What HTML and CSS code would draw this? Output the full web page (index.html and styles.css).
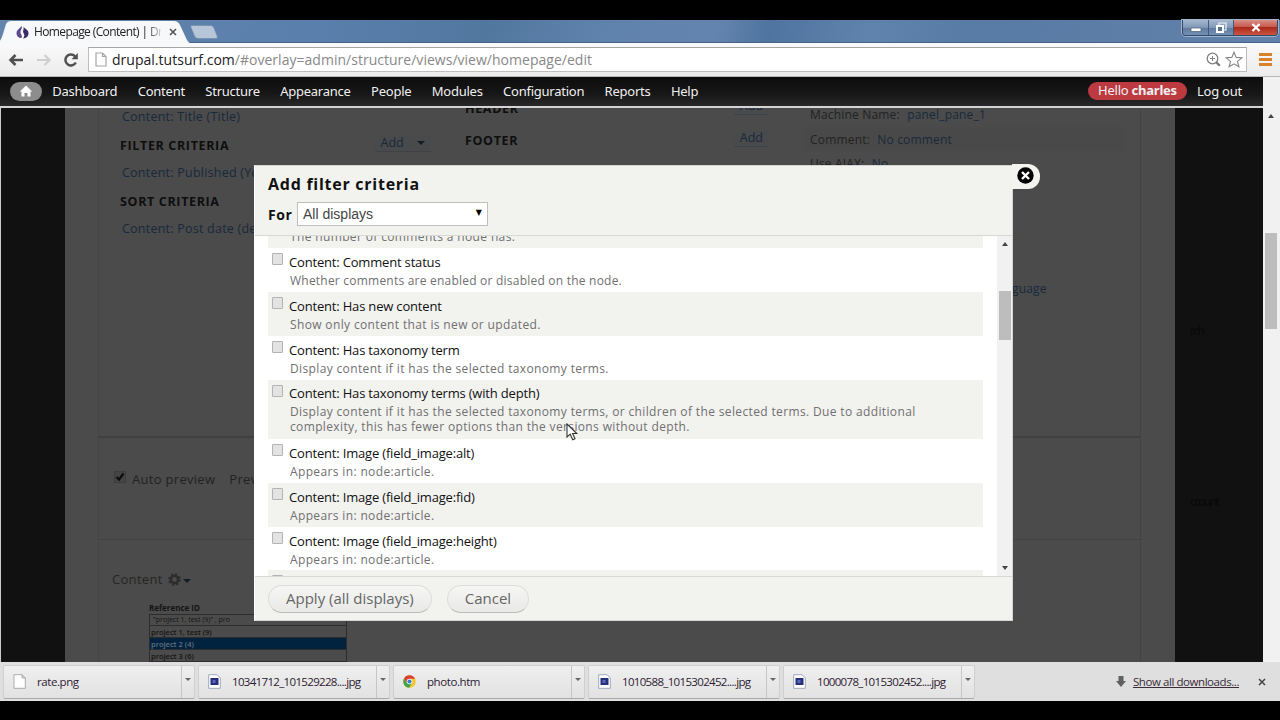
FILE: index.html
```
<!DOCTYPE html>
<html lang="en">
<head>
    <meta charset="UTF-8">
    <meta name="viewport" content="width=device-width, initial-scale=1.0">
    <title>Homepage (Content) | Drupal</title>
    <link rel="stylesheet" href="styles.css">
</head>
<body>
    <div class="browser">
        <div class="tabstrip">
            <div class="tab">
                <svg class="tab-shape" width="196" height="24" viewBox="0 0 196 24"><path d="M0 24 C4 22 5 20 7 14 L10 4 Q11.500 1 15 1 H178 Q182 1 184 5 L190 18 Q192 23 196 24 Z" fill="#f7f8f9"/></svg>
                <svg class="favicon" width="13" height="14" viewBox="0 0 13 14"><path d="M5.500 .5 C5 3 .5 4.500 .5 8 C.5 11 2.500 13 5.500 13 C7 10.500 4 9 4.500 6.500 C5 4.500 6.500 3 5.500 .5Z" fill="#5a4a8c"/><path d="M7.300 1 C8 3.500 12.500 4.500 12.500 8 C12.500 11.500 10 13.500 7 13.400 C9 11 8.500 9.500 7.500 8 C6.300 6 8.500 4 7.300 1Z" fill="#3b2d63"/></svg>
                <span class="tab-title">Homepage (Content) | Dr</span>
                <svg class="tab-close" width="8" height="8" viewBox="0 0 8 8"><path d="M1 1 L7 7 M7 1 L1 7" stroke="#555" stroke-width="1.600"/></svg>
            </div>
            <svg class="new-tab" width="29" height="14" viewBox="0 0 29 14"><path d="M1 .5 H21 Q23 .5 24 3 L27.500 12 Q27.500 13.500 26 13.500 H8 Q5.500 13.500 4.500 11 L.8 2 Z" fill="#b6c5d8" stroke="#6c86a8" stroke-width=".6"/></svg>
            <div class="window-buttons">
                <span class="win-btn win-min"><svg width="12" height="6" viewBox="0 0 12 6"><rect x="1" y="1" width="10" height="3.500" fill="#fff" stroke="#4c5a70" stroke-width=".7"/></svg></span>
                <span class="win-btn win-max"><svg width="12" height="12" viewBox="0 0 12 12"><path d="M4 3 V1 H11 V8 H9" fill="none" stroke="#eef2f8" stroke-width="1.200"/><rect x="2" y="4" width="6" height="6" fill="#56708f" stroke="#fff" stroke-width="2"/></svg></span>
                <span class="win-btn win-close"><svg width="10" height="9" viewBox="0 0 10 9"><path d="M1.500 1 L8.500 8 M8.500 1 L1.500 8" stroke="#fff" stroke-width="2.400"/></svg></span>
            </div>
        </div>

        <div class="toolbar">
            <svg class="nav-icon" width="16" height="14" viewBox="0 0 16 14"><path d="M15 7 H3 M7.500 2 L2.500 7 L7.500 12" fill="none" stroke="#505050" stroke-width="2.600"/></svg>
            <svg class="nav-icon" width="16" height="14" viewBox="0 0 16 14"><path d="M1 7 H13 M8.500 2 L13.500 7 L8.500 12" fill="none" stroke="#cfcfcf" stroke-width="2.200"/></svg>
            <svg class="nav-icon reload" width="16" height="16" viewBox="0 0 16 16"><path d="M12.800 10.500 A5.500 5.500 0 1 1 12 4.300" fill="none" stroke="#505050" stroke-width="2.500"/><path d="M14.800 1 V7.300 H8.500 Z" fill="#505050"/></svg>
            <div class="omnibox">
                <svg width="12" height="15" viewBox="0 0 12 15"><path d="M1 1 H7.500 L11 4.500 V14 H1 Z M7.500 1 V4.500 H11" fill="#fff" stroke="#a5a5a5" stroke-width="1.200"/></svg>
                <span class="url"><span class="host">drupal.tutsurf.com</span>/#overlay=admin/structure/views/view/homepage/edit</span>
                <svg class="zoom-icon" width="15" height="15" viewBox="0 0 15 15"><circle cx="6.500" cy="6.500" r="5.300" fill="none" stroke="#808080" stroke-width="1.300"/><path d="M4 6.500 H9 M6.500 4 V9" stroke="#808080"/><path d="M10.300 10.300 L13.800 13.800" stroke="#777" stroke-width="2.200"/></svg>
                <svg class="star-icon" width="18" height="17" viewBox="0 0 18 17"><path d="M9 1.200 L11.200 6.400 L16.800 6.800 L12.500 10.400 L13.900 15.800 L9 12.900 L4.100 15.800 L5.500 10.400 L1.200 6.800 L6.800 6.400 Z" fill="#fff" stroke="#858585" stroke-width="1.100"/></svg>
            </div>
            <div class="menu-icon"><i></i><i></i><i></i></div>
        </div>

        <div class="content">
            <div class="site">
                <div class="admin-bar">
                    <span class="home"><svg width="14" height="12" viewBox="0 0 14 12"><path d="M7 .5 L13.200 6.500 H11.500 V11.500 H8.500 V8 H5.500 V11.500 H2.500 V6.500 H.8 Z" fill="#fff"/></svg></span>
                    <a>Dashboard</a>
                    <a>Content</a>
                    <a>Structure</a>
                    <a>Appearance</a>
                    <a>People</a>
                    <a>Modules</a>
                    <a>Configuration</a>
                    <a>Reports</a>
                    <a>Help</a>
                    <span class="user">Hello <b>charles</b></span>
                    <a class="logout">Log out</a>
                </div>

                <div class="stage">
                    <div class="page">
                        <div class="views-columns">
                            <div class="column first">
                                <div class="setting link">Content: Title (Title)</div>
                                <div class="bucket">FILTER CRITERIA <span class="add split">Add <i class="caret"></i></span></div>
                                <div class="setting link">Content: Published (Yes)</div>
                                <div class="bucket">SORT CRITERIA</div>
                                <div class="setting link">Content: Post date (desc)</div>
                            </div>
                            <div class="column second">
                                <div class="bucket">HEADER <span class="add">Add</span></div>
                                <div class="bucket">FOOTER <span class="add">Add</span></div>
                            </div>
                            <div class="column third">
                                <div class="detail">Machine Name: <span class="link">panel_pane_1</span></div>
                                <div class="detail shade">Comment: <span class="link">No comment</span></div>
                                <div class="detail">Use AJAX: <span class="link">No</span></div>
                                <div class="detail language"><span class="link">guage</span></div>
                            </div>
                        </div>
                        <div class="preview-bar">
                            <svg width="12" height="12" viewBox="0 0 12 12"><rect x=".5" y=".5" width="11" height="11" fill="#454545" stroke="#3c3c3c"/><path d="M2.500 6 L5 8.500 L9.500 2.500" fill="none" stroke="#0c0c0c" stroke-width="2.200"/></svg>
                            <span>Auto preview</span>
                            <span class="preview-args">Prev</span>
                        </div>
                        <div class="preview">
                            <div class="preview-title">Content
                                <svg width="13" height="13" viewBox="0 0 13 13"><circle cx="6.500" cy="6.500" r="3.600" fill="none" stroke="#2c2c2c" stroke-width="2.400"/><circle cx="6.500" cy="6.500" r="5.400" fill="none" stroke="#2c2c2c" stroke-width="1.800" stroke-dasharray="2.200 2.040"/></svg><i class="caret"></i>
                            </div>
                            <div class="reference">
                                <div class="reference-label">Reference ID</div>
                                <div class="reference-input">"project 1, test (9)" , pro</div>
                                <div class="reference-row">project 1, test (9)</div>
                                <div class="reference-row selected">project 2 (4)</div>
                                <div class="reference-row">project 3 (6)</div>
                            </div>
                        </div>
                    </div>
                    <div class="gutter">
                        <span>rch</span>
                        <span>ccount</span>
                    </div>
                </div>
            </div>
            <div class="scrollbar page-scroll"><i class="up"></i><i class="thumb"></i></div>

            <div class="modal">
                <span class="modal-close"><svg width="17" height="17" viewBox="0 0 17 17"><circle cx="8.500" cy="8.500" r="8.200" fill="#000"/><path d="M5 5 L12 12 M12 5 L5 12" stroke="#fff" stroke-width="2.400"/></svg></span>
                <div class="modal-header">
                    <h1>Add filter criteria</h1>
                    <div class="for">For <span class="select">All displays <i>▼</i></span></div>
                </div>
                <div class="modal-body">
                    <div class="options">
                        <div class="option odd cut"><div class="desc">The number of comments a node has.</div></div>
                        <div class="option"><i class="box"></i><div class="name">Content: Comment status</div><div class="desc tight">Whether comments are enabled or disabled on the node.</div></div>
                        <div class="option odd"><i class="box"></i><div class="name">Content: Has new content</div><div class="desc">Show only content that is new or updated.</div></div>
                        <div class="option"><i class="box"></i><div class="name">Content: Has taxonomy term</div><div class="desc">Display content if it has the selected taxonomy terms.</div></div>
                        <div class="option odd tall"><i class="box"></i><div class="name">Content: Has taxonomy terms (with depth)</div><div class="desc">Display content if it has the selected taxonomy terms, or children of the selected terms. Due to additional<br>complexity, this has fewer options than the versions without depth.</div></div>
                        <div class="option"><i class="box"></i><div class="name">Content: Image (field_image:alt)</div><div class="desc">Appears in: node:article.</div></div>
                        <div class="option odd"><i class="box"></i><div class="name">Content: Image (field_image:fid)</div><div class="desc">Appears in: node:article.</div></div>
                        <div class="option last"><i class="box"></i><div class="name">Content: Image (field_image:height)</div><div class="desc">Appears in: node:article.</div></div>
                        <div class="option odd"><i class="box"></i></div>
                    </div>
                    <div class="scrollbar modal-scroll"><i class="up"></i><i class="thumb"></i><i class="down"></i></div>
                </div>
                <div class="modal-footer">
                    <span class="button">Apply (all displays)</span>
                    <span class="button">Cancel</span>
                </div>
            </div>
            <svg class="cursor" width="13" height="19" viewBox="0 0 13 19"><path d="M1 1 V14 L4.200 11.200 L6.700 16.800 L9 15.800 L6.600 10.500 H10.800 Z" fill="#fff" stroke="#333" stroke-width="1.100"/></svg>
        </div>

        <div class="downloads">
            <div class="download">
                <svg width="13" height="15" viewBox="0 0 13 15"><path d="M1 .7 H9 L12.300 4 V14.300 H1 Z M9 .7 V4 H12.300" fill="#fff" stroke="#999" stroke-width=".8"/></svg>
                <span>rate.png</span><i class="more"></i>
            </div>
            <div class="download">
                <svg width="13" height="15" viewBox="0 0 13 15"><path d="M.7 .7 H9 L12.300 4 V14.300 H.7 Z" fill="#fff" stroke="#8a97b0" stroke-width=".8"/><rect x="2.500" y="4" width="8" height="7" fill="#28307c"/><rect x="4.500" y="6" width="3" height="3" fill="#5968b8"/></svg>
                <span class="digits">10341712_101529228....jpg</span><i class="more"></i>
            </div>
            <div class="download">
                <svg width="13" height="15" viewBox="0 0 13 15"><circle cx="6.500" cy="7.500" r="6.300" fill="#f3c82f"/><path d="M1 4.500 A6.300 6.300 0 0 1 12.100 4.700 H6.500 L4 9 Z" fill="#d9403a"/><path d="M1 4.500 A6.300 6.300 0 0 0 6 13.800 L9 9 L4 9 Z" fill="#3fa34d"/><circle cx="6.500" cy="7.500" r="2.800" fill="#fff"/><circle cx="6.500" cy="7.500" r="2.100" fill="#3b7dc8"/></svg>
                <span>photo.htm</span><i class="more"></i>
            </div>
            <div class="download">
                <svg width="13" height="15" viewBox="0 0 13 15"><path d="M.7 .7 H9 L12.300 4 V14.300 H.7 Z" fill="#fff" stroke="#8a97b0" stroke-width=".8"/><rect x="2.500" y="4" width="8" height="7" fill="#28307c"/><rect x="4.500" y="6" width="3" height="3" fill="#5968b8"/></svg>
                <span class="digits">1010588_1015302452....jpg</span><i class="more"></i>
            </div>
            <div class="download">
                <svg width="13" height="15" viewBox="0 0 13 15"><path d="M.7 .7 H9 L12.300 4 V14.300 H.7 Z" fill="#fff" stroke="#8a97b0" stroke-width=".8"/><rect x="2.500" y="4" width="8" height="7" fill="#28307c"/><rect x="4.500" y="6" width="3" height="3" fill="#5968b8"/></svg>
                <span class="digits">1000078_1015302452....jpg</span><i class="more"></i>
            </div>
            <div class="show-all">
                <svg width="10" height="11" viewBox="0 0 10 11"><path d="M2.500 0 H7.500 V5 H10 L5 11 L0 5 H2.500 Z" fill="#606060"/></svg>
                <a>Show all downloads...</a>
                <svg class="shelf-close" width="8" height="8" viewBox="0 0 8 8"><path d="M1 1 L7 7 M7 1 L1 7" stroke="#444" stroke-width="1.500"/></svg>
            </div>
        </div>
    </div>
</body>
</html>
```
FILE: styles.css
```
* {
    box-sizing: border-box;
}

body {
    margin: 0;
    padding: 20px 0;
    height: 720px;
    overflow: hidden;
    background: #000;
    font-family: "Open Sans", "Noto Sans", sans-serif;
    white-space: nowrap;
}

svg {
    display: block;
    flex: none;
}

.browser {
    height: 681px;
    display: flex;
    flex-direction: column;
}

/* window frame */
.tabstrip {
    height: 23px;
    display: flex;
    align-items: flex-start;
    background: linear-gradient(100deg, #6484ac 0%, #5a7fac 25%, #52779f 38%, #6083ad 48%, #6384ae 56%, #4f749f 60%, #6083ad 68%, #587ba5 76%, #6081aa 100%);
    border-bottom: 1px solid #45638a;
}

.tab {
    position: relative;
    width: 190px;
    height: 23px;
    padding: 0 0 0 16px;
    display: flex;
    align-items: center;
    flex: none;
}

.tab-shape {
    position: absolute;
    left: -4px;
    top: 0;
}

.favicon, .tab-close {
    position: relative;
}

.tab-title {
    position: relative;
    width: 127px;
    margin: 0 8px 0 5px;
    overflow: hidden;
    font-size: 12px;
    line-height: 22px;
    letter-spacing: -0.620px;
    color: #222;
    -webkit-mask-image: linear-gradient(to right, #000 112px, transparent 130px);
}

.new-tab {
    margin: 5px 0 0 0;
}

.window-buttons {
    display: flex;
    margin: 0 2px 0 auto;
    border: 1px solid #33496a;
    border-top: 0;
    border-radius: 0 0 4px 4px;
    box-shadow: 0 0 0 1px #9fb4ce;
    overflow: hidden;
}

.win-btn {
    height: 15px;
    display: flex;
    align-items: center;
    justify-content: center;
    background: linear-gradient(#a4b6cc, #8199b8 50%, #5e7a9e 51%, #7391b5);
    border-right: 1px solid #42597b;
}

.win-min {
    width: 26px;
    padding-top: 4px;
}

.win-max {
    width: 25px;
}

.win-close {
    width: 43px;
    border: 0;
    background: linear-gradient(#d98f86, #c65a4d 45%, #ab2a1d 50%, #cc5540);
}

.toolbar {
    height: 34px;
    display: flex;
    align-items: center;
    padding: 0 8px 0 8px;
    background: linear-gradient(#fafafa, #ececec);
    border-bottom: 1px solid #b9b9b9;
}

.nav-icon {
    margin-right: 12px;
}

.reload {
    margin: 0 13px 0 -1px;
}

.omnibox {
    flex: 1;
    height: 25px;
    display: flex;
    align-items: center;
    margin: 0 12px 0 -4px;
    padding: 0 3px 0 6px;
    background: #fff;
    border: 1px solid #bdbdbd;
    border-top-color: #a5a5a5;
}

.url {
    margin-left: 5px;
    font-size: 14px;
    letter-spacing: 0.020px;
    color: #888;
}

.host {
    color: #222;
}

.zoom-icon {
    margin-left: auto;
}

.star-icon {
    margin-left: 4px;
}

.menu-icon {
    width: 13px;
}

.menu-icon i {
    display: block;
    height: 3px;
    margin: 2px 0;
    background: #d9822b;
}

/* page area with its own scrollbar */
.content {
    position: relative;
    height: 585px;
    display: flex;
    overflow: hidden;
}

.site {
    width: 1263px;
    display: flex;
    flex-direction: column;
}

.admin-bar {
    height: 29px;
    flex: none;
    display: flex;
    align-items: center;
    padding: 0 10px 2px;
    background: linear-gradient(#0d0d0d, #171717 60%, #292929);
    font-family: "Noto Sans", sans-serif;
    font-size: 13px;
    letter-spacing: -0.240px;
    color: #f0f0f0;
}

.admin-bar a {
    padding: 0 10.200px;
}

.home {
    width: 32px;
    height: 19px;
    display: flex;
    align-items: center;
    justify-content: center;
    margin-top: 1px;
    border-radius: 10px;
    background: #8d8d8d;
}

.user {
    height: 18px;
    margin-left: auto;
    padding: 0 10px;
    line-height: 17px;
    border-radius: 9px;
    background: #bc3a40;
}

.admin-bar .logout {
    padding-right: 11px;
}

.stage {
    flex: 1;
    display: flex;
    border-top: 2px solid #d4d4d4;
    border-left: 1px solid #ccc;
    background: #111;
    overflow: hidden;
}

.page {
    width: 1110px;
    margin-left: 64px;
    background: #4b4b4b;
    flex: none;
    color: #222;
}

.views-columns {
    height: 330px;
    margin: 0 34px 0 33px;
    padding-left: 21px;
    display: flex;
    border-left: 1px solid #444;
    border-right: 1px solid #434343;
    border-bottom: 2px solid #404040;
    font-size: 12px;
}

.column {
    flex: none;
}

.link {
    color: #18293b;
}

.bucket {
    display: flex;
    align-items: center;
    justify-content: space-between;
    font-weight: bold;
    font-size: 12.500px;
    letter-spacing: 0.650px;
    color: #0e0e0e;
}

.first {
    width: 311px;
}

.first .setting, .first .bucket {
    height: 28px;
    line-height: 28px;
}

.first .bucket {
    padding-top: 2px;
}

.first .setting {
    padding-left: 2px;
    font-size: 12.500px;
    letter-spacing: 0.230px;
}

.first .setting:first-child {
    margin-top: -5px;
}

.add {
    height: 17px;
    padding: 0 6px;
    line-height: 15px;
    border-bottom: 1px solid #404346;
    background: #494a4c;
    font-weight: normal;
    font-size: 12.500px;
    letter-spacing: 0;
    color: #18293b;
}

.split {
    margin-top: -5px;
}

.caret {
    display: inline-block;
    margin: 0 0 2px 10px;
    border: 4px solid transparent;
    border-top-color: #141c26;
    border-bottom: 0;
}

.second {
    width: 304px;
    margin-left: 34px;
    margin-top: -16px;
}

.second .bucket {
    height: 32px;
}

.second .add {
    margin-top: -3px;
}

.third {
    width: 320px;
    margin-left: 35px;
    margin-top: -6px;
}

.detail {
    height: 24.500px;
    padding-left: 6px;
    line-height: 25px;
    letter-spacing: 0.180px;
}

.detail .link {
    margin-left: 4px;
}

.shade {
    background: #494949;
}

.language {
    margin-top: 100px;
    padding-left: 204px;
}

.preview-bar {
    height: 102px;
    margin: 0 34px 0 33px;
    padding: 0 0 20px 15px;
    display: flex;
    align-items: center;
    gap: 6px;
    border-left: 1px solid #444;
    border-right: 1px solid #434343;
    border-bottom: 1px solid #424242;
    font-size: 13px;
    letter-spacing: 0.300px;
}

.preview-bar svg {
    margin-top: -3px;
}

.preview-args {
    margin-left: 8px;
}

.preview {
    height: 130px;
    margin: 0 34px 0 33px;
    padding: 29px 0 0 13px;
    border-left: 1px solid #444;
    border-right: 1px solid #434343;
}

.preview-title {
    display: flex;
    align-items: center;
    height: 20px;
    font-size: 13px;
    letter-spacing: 0.300px;
    color: #252525;
}

.preview-title svg {
    margin-left: 5px;
}

.preview-title .caret {
    margin: 4px 0 0 2px;
}

.reference {
    width: 198px;
    margin: 13px 0 0 37px;
    font-size: 7.500px;
    font-weight: 600;
    line-height: 12px;
    color: #151515;
}

.reference-label {
    font-weight: bold;
    font-size: 8px;
    height: 12px;
}

.reference-input {
    height: 12px;
    padding-left: 3px;
    line-height: 10px;
    font-size: 7px;
    font-weight: normal;
    border: 1px solid #2d2d2d;
}

.reference-row {
    height: 12px;
    padding-left: 1px;
    border: 1px solid #2d2d2d;
    border-top: 0;
}

.selected {
    background: #012340;
    color: #62717f;
}

.gutter {
    padding: 214px 0 0 15px;
    font-size: 12px;
    font-weight: 600;
    letter-spacing: -1.800px;
    color: #0a0a0a;
}

.gutter span {
    display: block;
    height: 171px;
}

/* scrollbars */
.scrollbar {
    display: flex;
    flex-direction: column;
    align-items: center;
    background: #f1f1f1;
}

.scrollbar .up, .scrollbar .down {
    border: 3.500px solid transparent;
}

.scrollbar .up {
    border-bottom: 4px solid #444;
    border-top: 0;
}

.scrollbar .down {
    border-top: 4px solid #444;
    border-bottom: 0;
}

.scrollbar .thumb {
    background: #bdbdbd;
}

.page-scroll {
    width: 17px;
    padding: 37px 1px 0 0;
}

.page-scroll .thumb {
    width: 12px;
    height: 96px;
    margin-top: 115px;
}

.modal-scroll {
    width: 15px;
    margin-left: auto;
    padding: 6px 0 6px;
}

.modal-scroll .thumb {
    width: 12px;
    height: 49px;
    margin: 45px 0 auto;
}

/* filter dialog */
.modal {
    position: absolute;
    left: 254px;
    top: 88px;
    width: 759px;
    height: 456px;
    display: flex;
    flex-direction: column;
    background: #fff;
    border: 1px solid #d5d5d3;
    border-left-color: #fff;
}

.modal-close {
    position: absolute;
    left: 757px;
    top: -2px;
    width: 28px;
    height: 25px;
    padding: 3px 0 0 5px;
    border-radius: 0 12px 12px 0;
    background: #f3f3f0;
}

.modal-header {
    height: 70px;
    flex: none;
    padding: 7px 13px 0;
    background: #f2f2ef;
    border-bottom: 1px solid #d8d8d5;
}

.modal-header h1 {
    margin: 0;
    font-size: 16px;
    line-height: 22px;
    letter-spacing: 0.740px;
    color: #111;
}

.for {
    display: flex;
    align-items: center;
    margin-top: 7px;
    font-size: 14px;
    font-weight: bold;
    letter-spacing: 0.600px;
    color: #111;
}

.select {
    width: 191px;
    height: 24px;
    display: flex;
    align-items: center;
    justify-content: space-between;
    margin-left: 4.500px;
    padding: 0 5px;
    border: 1px solid #bfbfbf;
    background: #fff;
    font-family: "Liberation Sans", Arial, sans-serif;
    font-size: 14px;
    font-weight: normal;
    letter-spacing: 0;
    color: #444;
}

.select i {
    margin-top: -3px;
    font-family: "DejaVu Sans", sans-serif;
    font-size: 8px;
    font-style: normal;
    color: #000;
}

.modal-body {
    height: 340px;
    flex: none;
    display: flex;
    overflow: hidden;
}

.options {
    width: 715px;
    margin-left: 13px;
}

.option {
    position: relative;
    height: 44px;
    padding: 5px 0 0 21px;
}

.odd {
    background: #f2f2ef;
}

.option .box {
    position: absolute;
    left: 4px;
    top: 5px;
    width: 11px;
    height: 12px;
    border: 1px solid #b3b3b3;
    border-radius: 1px;
    background: #e3e3e3;
}

.name {
    font-size: 13px;
    line-height: 18px;
    letter-spacing: -0.180px;
    color: #111;
}

.desc {
    padding: 2px 0 0 1px;
    font-size: 12px;
    line-height: 15px;
    letter-spacing: 0.360px;
    color: #707070;
}

.tight {
    letter-spacing: 0.220px;
}

.cut {
    height: 12px;
    display: flex;
    align-items: flex-end;
    padding: 0 0 4px 21px;
}

.tall {
    height: 59px;
}

.tall .name {
    margin-top: -1px;
}

.last {
    height: 43px;
}

.modal-footer {
    flex: 1;
    display: flex;
    gap: 15px;
    padding: 8px 13px 0;
    background: #f2f2ef;
    border-top: 1px solid #d8d8d5;
}

.button {
    height: 28px;
    padding: 0 17px;
    line-height: 25px;
    border: 1px solid #ddd;
    border-bottom-color: #bbb;
    border-radius: 14px;
    background: linear-gradient(#f6f6f4, #e9e9e7);
    font-size: 15px;
    color: #666;
}

.cursor {
    position: absolute;
    left: 566px;
    top: 346px;
}

/* downloads shelf */
.downloads {
    height: 39px;
    display: flex;
    align-items: flex-start;
    gap: 3px;
    padding: 3px 0 0 3px;
    background: #dfdfdf;
}

.download {
    width: 192px;
    height: 34px;
    display: flex;
    align-items: center;
    padding: 0 0 2px 9px;
    border: 1px solid #cfcfcf;
    border-bottom-color: #aaa;
    border-radius: 2px;
    background: linear-gradient(#efefef, #e2e2e2);
    font-size: 11.500px;
    letter-spacing: -0.420px;
    color: #2c2030;
}

.download span {
    margin-left: 11px;
}

.download .digits {
    letter-spacing: -0.670px;
}

.more {
    width: 13px;
    height: 32px;
    margin: 0 0 -2px auto;
    border-left: 1px solid #c6c6c6;
}

.more::before {
    content: "";
    display: block;
    margin: 12px 0 0 3px;
    width: 0;
    border: 3px solid transparent;
    border-top-color: #666;
    border-bottom: 0;
}

.show-all {
    height: 33px;
    display: flex;
    align-items: center;
    margin-left: auto;
    padding-right: 14px;
    font-size: 11.500px;
    letter-spacing: -0.430px;
    color: #3a2c38;
}

.show-all a {
    margin-left: 7px;
    text-decoration: underline;
}

.shelf-close {
    margin-left: 19px;
}
```
